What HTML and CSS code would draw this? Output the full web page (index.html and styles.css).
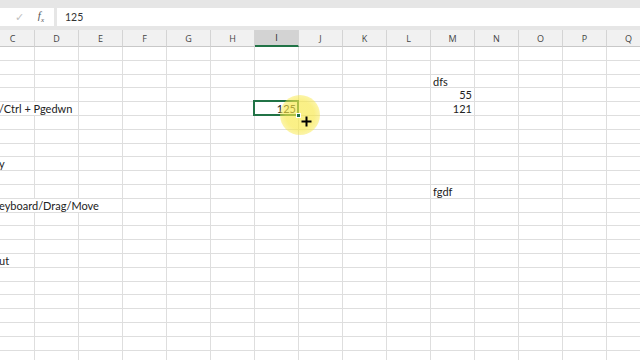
FILE: index.html
```html
<!DOCTYPE html>
<html>
<head>
    <meta charset="UTF-8">
    <title>Book1 - Excel</title>
    <link rel="stylesheet" href="styles.css">
</head>
<body>
    <div class="app">
        <div class="ribbon-edge"></div>
        <div class="formula-bar">
            <div class="formula-tools">
                <span class="tool tool-enter">&#10003;</span>
                <span class="tool tool-fx">f<sub>x</sub></span>
            </div>
            <div class="formula-input">125</div>
        </div>
        <div class="bar-gap"></div>
        <div class="sheet">
            <div class="grid" id="grid"></div>
            <div class="cursor-spot"></div>
            <svg class="cursor-plus" width="11" height="11" viewBox="0 0 11 11">
                <path d="M5.5 0.5v10M0.5 5.5h10" stroke="#000" stroke-width="2" fill="none"/>
            </svg>
        </div>
    </div>
    <script>
        const COLUMNS = ['C', 'D', 'E', 'F', 'G', 'H', 'I', 'J', 'K', 'L', 'M', 'N', 'O', 'P', 'Q'];
        const ROW_COUNT = 23;
        const ACTIVE = { row: 4, col: 6 };

        // text that starts in column B spills into view from the left edge
        const CELLS = [
          { row: 2, col: 10, text: 'dfs' },
          { row: 3, col: 10, text: '55', num: true },
          { row: 4, col: 0, text: '/Ctrl + Pgedwn', span: 2, spill: true },
          { row: 4, col: 6, text: '125', num: true },
          { row: 4, col: 10, text: '121', num: true },
          { row: 8, col: 0, text: 'y', spill: true },
          { row: 10, col: 10, text: 'fgdf' },
          { row: 11, col: 0, text: 'eyboard/Drag/Move', span: 3, spill: true },
          { row: 15, col: 0, text: 'ut', spill: true }
        ];

        const grid = document.getElementById('grid');

        COLUMNS.forEach((name, index) => {
          const head = document.createElement('div');
          head.className = 'col-head';
          if (index === ACTIVE.col) head.classList.add('selected');
          head.textContent = name;
          grid.appendChild(head);
        });

        for (let row = 0; row < ROW_COUNT; row++) {
          let col = 0;
          while (col < COLUMNS.length) {
            const data = CELLS.find(c => c.row === row && c.col === col);
            const cell = document.createElement('div');
            cell.className = 'cell';
            if (data) {
              cell.textContent = data.text;
              if (data.num) cell.classList.add('num');
              if (data.spill) cell.classList.add('spill');
              if (data.span) cell.style.gridColumn = `span ${data.span}`;
            }
            if (row === ACTIVE.row && col === ACTIVE.col) cell.classList.add('active');
            grid.appendChild(cell);
            col += data && data.span ? data.span : 1;
          }
        }
    </script>
</body>
</html>
```

FILE: styles.css
```css
body {
    margin: 0;
    background: #fff;
    font-family: Lato, "Liberation Sans", sans-serif;
    overflow: hidden;
}

.app {
    width: 640px;
    height: 360px;
    overflow: hidden;
    background: #e6e6e6;
}

.ribbon-edge {
    height: 8px;
    background: #e6e6e6;
}

.formula-bar {
    display: flex;
    height: 18px;
    gap: 3px;
    background: #e6e6e6;
}

.formula-tools {
    width: 54px;
    background: #fff;
    display: flex;
    align-items: center;
    justify-content: flex-end;
    gap: 14px;
    padding-right: 10px;
    box-sizing: border-box;
}

.tool {
    color: #c0c0c0;
    font-size: 11px;
}

.tool-fx {
    color: #555;
    font-family: "Liberation Serif", serif;
    font-style: italic;
    font-size: 11px;
}

.tool-fx sub {
    font-size: 7px;
}

.formula-input {
    flex: 1;
    background: #fff;
    font-size: 10.5px;
    color: #333;
    line-height: 18px;
    padding-left: 8px;
}

.bar-gap {
    height: 4px;
    background: #e6e6e6;
}

.sheet {
    position: relative;
    height: 330px;
    background: #fff;
}

.grid {
    display: grid;
    grid-template-columns: repeat(15, 44px);
    grid-template-rows: 17px;
    grid-auto-rows: 13.8px;
    margin-left: -9px;
}

.col-head {
    background: #f1f1f1;
    border-right: 1px solid #d4d4d4;
    border-bottom: 1px solid #c8c8c8;
    color: #444;
    font-family: "Open Sans", sans-serif;
    font-size: 9px;
    display: flex;
    align-items: center;
    justify-content: center;
    box-sizing: border-box;
}

.col-head.selected {
    background: #d3d3d3;
    border-bottom: 2px solid #217346;
    color: #222;
}

.cell {
    border-right: 1px solid #dedede;
    border-bottom: 1px solid #dedede;
    box-sizing: border-box;
    font-size: 11px;
    color: #222;
    line-height: 14px;
    padding-left: 2px;
    white-space: nowrap;
    overflow: hidden;
}

.cell.num {
    text-align: right;
    padding-left: 0;
    padding-right: 2px;
}

.cell.spill {
    padding-left: 8px;
}

.cell.active {
    position: relative;
    overflow: visible;
}

.cell.active::after {
    content: "";
    position: absolute;
    left: -2px;
    top: -2px;
    right: -1px;
    bottom: -1px;
    border: 2px solid #217346;
}

.cell.active::before {
    content: "";
    position: absolute;
    right: -3px;
    bottom: -3px;
    width: 3px;
    height: 3px;
    background: #217346;
    border: 1px solid #fff;
    z-index: 1;
}

.cursor-spot {
    position: absolute;
    left: 280px;
    top: 65px;
    width: 40px;
    height: 40px;
    border-radius: 50%;
    background: radial-gradient(circle, rgba(248, 232, 70, 0.65) 50%, rgba(248, 232, 70, 0.4) 78%, rgba(248, 232, 70, 0) 100%);
}

.cursor-plus {
    position: absolute;
    left: 301px;
    top: 86px;
}
```
